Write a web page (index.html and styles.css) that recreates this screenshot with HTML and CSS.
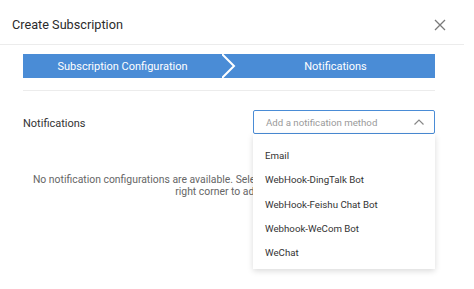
FILE: index.html
```html
<!DOCTYPE html>
<html lang="en">
<head>
<meta charset="UTF-8">
<meta name="viewport" content="width=device-width, initial-scale=1.0">
<title>Create Subscription</title>
<link rel="stylesheet" href="styles.css">
</head>
<body>
<div class="modal">
  <div class="modal-header">
    <span class="modal-title">Create Subscription</span>
    <svg class="close" width="12" height="12" viewBox="0 0 12 12">
      <path d="M1 1 L11 11 M11 1 L1 11" stroke="#7a7a7a" stroke-width="1.3" fill="none"/>
    </svg>
  </div>
  <div class="modal-body">
    <div class="steps">
      <div class="step">Subscription Configuration</div>
      <svg class="step-sep" width="14" height="24" viewBox="0 0 14 24">
        <polyline points="0,0 12,12 0,24" stroke="#fff" stroke-width="2" fill="none"/>
      </svg>
      <div class="step">Notifications</div>
    </div>
    <div class="divider"></div>

    <div class="form-row">
      <label class="form-label">Notifications</label>
      <div class="select-wrap">
        <div class="select">
          <span class="placeholder">Add a notification method</span>
          <svg class="arrow" width="10" height="6" viewBox="0 0 10 6">
            <polyline points="0.5,5.5 5,1 9.5,5.5" stroke="#888" stroke-width="1.2" fill="none"/>
          </svg>
        </div>
        <!-- dropdown menu, open -->
        <ul class="menu">
          <li>Email</li>
          <li>WebHook-DingTalk Bot</li>
          <li>WebHook-Feishu Chat Bot</li>
          <li>Webhook-WeCom Bot</li>
          <li>WeChat</li>
        </ul>
      </div>
    </div>

    <p class="empty">No notification configurations are available. Select a notification method in the upper-<br>right corner to add one.</p>
  </div>
</div>
</body>
</html>
```

FILE: styles.css
```css
body {
    margin: 0;
    padding: 0;
    background: #fff;
    font-family: Roboto, "Liberation Sans", Arial, sans-serif;
    color: #333;
}
.modal {
    width: 464px;
    height: 289px;
}
.modal-header {
    height: 45px;
    box-sizing: border-box;
    padding: 5px 18px 0 12px;
    display: flex;
    align-items: center;
    justify-content: space-between;
    border-bottom: 1px solid #ececec;
}
.modal-title {
    font-size: 12.7px;
    color: #2b2b2b;
}
.close {
    display: block;
}
.modal-body {
    padding: 9px 29px 0 23px;
}
.steps {
    display: flex;
    height: 24px;
    background: #4a8cd6;
    color: #fff;
    font-size: 11px;
}
.step {
    flex: 1;
    display: flex;
    align-items: center;
    justify-content: center;
    padding-top: 1px;
}
.step-sep {
    display: block;
    flex: none;
}
.divider {
    margin-top: 12px;
    border-top: 1px solid #ececec;
}
.form-row {
    display: flex;
    align-items: center;
    justify-content: space-between;
    margin-top: 19px;
}
.form-label {
    font-size: 11px;
    color: #333;
    padding-top: 2px;
}
.select-wrap {
    position: relative;
    width: 182px;
}
.select {
    height: 24px;
    box-sizing: border-box;
    border: 1px solid #4a8cd6;
    border-radius: 2px;
    padding: 0 10px 0 12px;
    display: flex;
    align-items: center;
    justify-content: space-between;
}
.placeholder {
    font-size: 9.7px;
    color: #9a9a9a;
}
.arrow {
    display: block;
}
.menu {
    position: absolute;
    top: 24px;
    left: 0;
    right: 0;
    margin: 0;
    padding: 10px 0 4px;
    list-style: none;
    background: #fff;
    box-shadow: 0 2px 6px rgba(0, 0, 0, 0.15);
    z-index: 2;
}
.menu li {
    height: 24.3px;
    line-height: 24.3px;
    padding-left: 12px;
    font-size: 9.7px;
    color: #333;
}
.empty {
    margin: 40px 0 0;
    text-align: center;
    white-space: nowrap;
    font-size: 10.4px;
    line-height: 12px;
    color: #666;
}
```
